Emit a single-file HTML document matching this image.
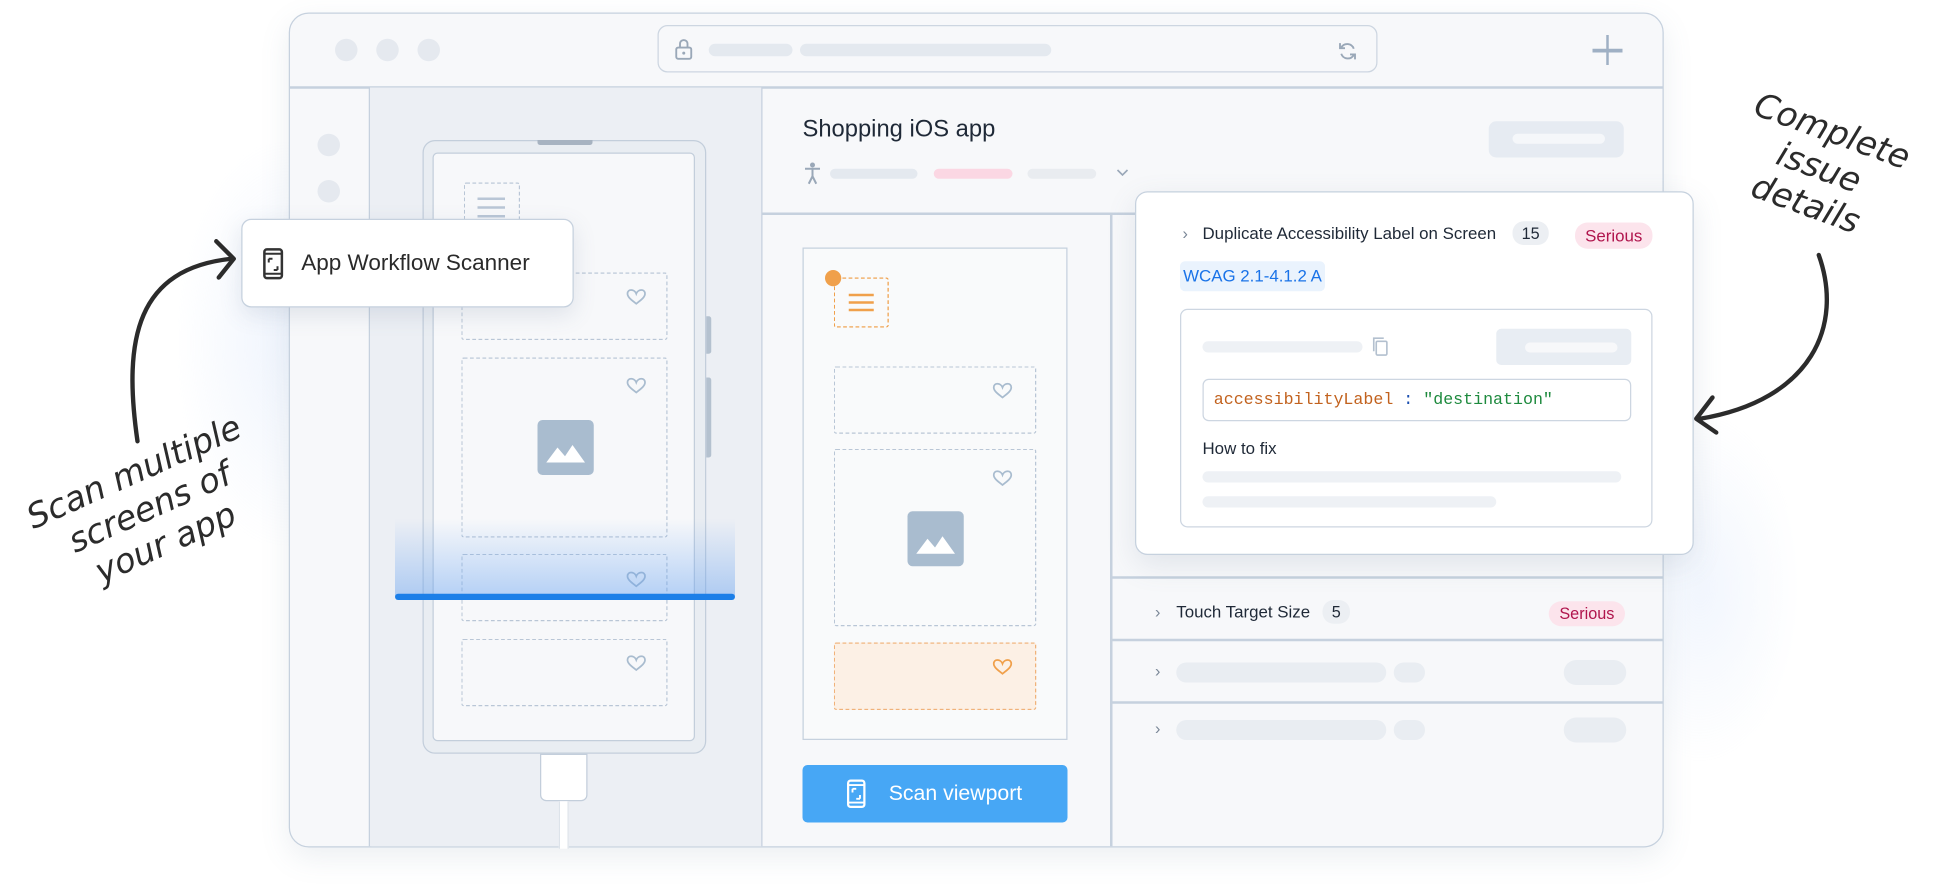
<!DOCTYPE html>
<html><head><meta charset="utf-8"><style>
*{margin:0;padding:0;box-sizing:border-box}
html,body{width:1960px;height:889px;overflow:hidden;background:#fff;font-family:"Liberation Sans",sans-serif}
#w{position:absolute;left:0;top:0;width:1568px;height:712px;transform:scale(1.25);transform-origin:0 0}
.a{position:absolute}
.pill{position:absolute;background:#e9edf2;border-radius:8px}
.dash{position:absolute;border:1.2px dashed #b9c6d6;border-radius:2px}
.hand{position:absolute;font-family:"DejaVu Sans","Liberation Sans",sans-serif;font-style:italic;color:#2b2b2b;font-size:27px;line-height:31px;text-align:center}
</style></head><body><div id="w">
<!-- glow -->
<div class="a" style="left:140px;top:110px;width:180px;height:330px;border-radius:50%;background:radial-gradient(closest-side,rgba(200,218,248,.28),rgba(255,255,255,0));"></div>
<div class="a" style="left:1280px;top:330px;width:160px;height:280px;border-radius:50%;background:radial-gradient(closest-side,rgba(200,218,248,.25),rgba(255,255,255,0));"></div>
<!-- window -->
<div class="a" style="left:231px;top:10px;width:1100px;height:668px;border:1.5px solid #c6d1de;border-radius:16px;background:#f7f8fa;overflow:hidden;box-shadow:0 8px 24px rgba(100,120,150,.12)">
  <div class="a" style="left:0;top:58px;width:1100px;height:1.5px;background:#c6d1de"></div>
  <div class="a" style="left:36px;top:20px;width:18px;height:18px;border-radius:50%;background:#e5e9ef"></div>
  <div class="a" style="left:69px;top:20px;width:18px;height:18px;border-radius:50%;background:#e5e9ef"></div>
  <div class="a" style="left:102px;top:20px;width:18px;height:18px;border-radius:50%;background:#e5e9ef"></div>
  <div class="a" style="left:294px;top:9px;width:576px;height:38px;border:1.3px solid #cdd6e1;border-radius:8px;background:#f7f8fa"></div>
  <svg class="a" style="left:307px;top:19px" width="16" height="18" viewBox="0 0 16 18"><rect x="2" y="8" width="12" height="9" rx="1.5" fill="none" stroke="#9aa8b8" stroke-width="1.5"/><path d="M5 8V5a3 3 0 016 0v3" fill="none" stroke="#9aa8b8" stroke-width="1.5"/><circle cx="8" cy="12.5" r="1.2" fill="#9aa8b8"/></svg>
  <div class="pill" style="left:335px;top:24px;width:67px;height:10px;background:#e4e9ef"></div>
  <div class="pill" style="left:408px;top:24px;width:201px;height:10px;background:#e4e9ef"></div>
  <svg class="a" style="left:837px;top:21px" width="18" height="18" viewBox="0 0 18 18"><path d="M14 7a5.5 5.5 0 00-10-1M4 11a5.5 5.5 0 0010 1" fill="none" stroke="#9aa8b8" stroke-width="1.5"/><path d="M3 2.5v4h4M15 15.5v-4h-4" fill="none" stroke="#9aa8b8" stroke-width="1.5"/></svg>
  <div class="a" style="left:1042px;top:28px;width:24px;height:2.5px;background:#9fb0c4"></div>
  <div class="a" style="left:1052.8px;top:17px;width:2.5px;height:24px;background:#9fb0c4"></div>
  <div class="a" style="left:63px;top:59px;width:1.5px;height:620px;background:#c6d1de"></div>
  <div class="a" style="left:22px;top:96px;width:18px;height:18px;border-radius:50%;background:#e5e9ef"></div>
  <div class="a" style="left:22px;top:133px;width:18px;height:18px;border-radius:50%;background:#e5e9ef"></div>
  <div class="a" style="left:64px;top:59px;width:314px;height:620px;background:#eceff4;border-right:1.5px solid #c6d1de"></div>
  <div class="a" style="left:410px;top:82px;font-size:19px;color:#1f2937">Shopping iOS app</div>
  <svg class="a" style="left:410px;top:118px" width="16" height="20" viewBox="0 0 16 20"><circle cx="8" cy="3" r="2" fill="#9aa8b8"/><path d="M2 6h12M8 6v6M5 18l3-6 3 6" stroke="#9aa8b8" stroke-width="1.6" fill="none"/></svg>
  <div class="pill" style="left:432px;top:124px;width:70px;height:8px;background:#e4e9ef"></div>
  <div class="pill" style="left:515px;top:124px;width:63px;height:8px;background:#fbd7e3"></div>
  <div class="pill" style="left:590px;top:124px;width:55px;height:8px;background:#e9ecf0"></div>
  <svg class="a" style="left:661px;top:123px" width="10" height="8" viewBox="0 0 10 8"><path d="M1 2l4 4 4-4" fill="none" stroke="#9aa8b8" stroke-width="1.3"/></svg>
  <div class="a" style="left:959px;top:86px;width:108px;height:29px;background:#e6ebf2;border-radius:6px"></div>
  <div class="a" style="left:978px;top:96px;width:74px;height:8px;background:#f5f7fa;border-radius:4px"></div>
  <div class="a" style="left:378px;top:159px;width:722px;height:1.5px;background:#c6d1de"></div>
  <div class="a" style="left:656px;top:160px;width:1.5px;height:520px;background:#c6d1de"></div>
  <div class="a" style="left:657px;top:450px;width:445px;height:1.5px;background:#c6d1de"></div>
  <div class="a" style="left:657px;top:500px;width:445px;height:1.5px;background:#c6d1de"></div>
  <div class="a" style="left:657px;top:550px;width:445px;height:1.5px;background:#c6d1de"></div>
  <div class="a" style="left:692px;top:471px;font-size:13px;color:#7a8797">›</div>
  <div class="a" style="left:709px;top:471px;font-size:13.5px;color:#1f2937">Touch Target Size</div>
  <div class="a" style="left:826px;top:469px;width:22px;height:19px;border-radius:9px;background:#eceff3;font-size:13px;color:#1f2937;text-align:center;line-height:19px">5</div>
  <div class="a" style="left:1007px;top:470px;width:61px;height:20px;border-radius:10px;background:#fce4ec;font-size:13px;color:#b0154d;text-align:center;line-height:20px">Serious</div>
  <div class="a" style="left:692px;top:518px;font-size:13px;color:#7a8797">›</div>
  <div class="pill" style="left:709px;top:519px;width:168px;height:16px"></div>
  <div class="pill" style="left:883px;top:519px;width:25px;height:16px"></div>
  <div class="pill" style="left:1019px;top:517px;width:50px;height:20px;border-radius:10px"></div>
  <div class="a" style="left:692px;top:564px;font-size:13px;color:#7a8797">›</div>
  <div class="pill" style="left:709px;top:565px;width:168px;height:16px"></div>
  <div class="pill" style="left:883px;top:565px;width:25px;height:16px"></div>
  <div class="pill" style="left:1019px;top:563px;width:50px;height:20px;border-radius:10px"></div>
  <div class="a" style="left:410px;top:187px;width:212px;height:394px;border:1.5px solid #c6d1de;background:#f9fafb"></div>
  <div class="dash" style="left:435px;top:211px;width:44px;height:40px;border-color:#f0a04b;border-width:1.6px"></div>
  <div class="a" style="left:428px;top:205px;width:13px;height:13px;border-radius:50%;background:#f0a04b"></div>
  <div class="a" style="left:447px;top:224px;width:20px;height:2px;background:#f0a04b;box-shadow:0 6px 0 #f0a04b,0 12px 0 #f0a04b"></div>
  <div class="dash" style="left:435px;top:282px;width:162px;height:54px"></div>
  <div class="dash" style="left:435px;top:348px;width:162px;height:142px"></div>
  <div class="dash" style="left:435px;top:503px;width:162px;height:54px;background:#fcf0e5;border-color:#f0b27a"></div>
  <div class="a" style="left:494px;top:398px;width:45px;height:44px;border-radius:4px;background:#a9bccf"></div>
  <svg class="a" style="left:494px;top:398px" width="45" height="44"><path d="M7 34l9-12 6 7 6-9 10 14z" fill="#fff"/></svg>
  <div class="a" style="left:410px;top:601px;width:212px;height:46px;border-radius:4px;background:#47a7f5"></div>
  <svg class="a" style="left:445px;top:612px" width="16" height="24" viewBox="0 0 16 24"><rect x="1.5" y="1.5" width="13" height="21" rx="2" fill="none" stroke="#fff" stroke-width="1.8"/><path d="M1.5 5h13M1.5 19h13M5 8v3M5 8h3M11 16v-3M11 16h-3" stroke="#fff" stroke-width="1.5" fill="none"/></svg>
  <div class="a" style="left:479px;top:614px;font-size:17px;color:#fff">Scan viewport</div>
</div>
<svg class="a" style="left:0;top:0" width="1568" height="712">
<defs><path id="h" d="M0 3c-1.5-4-7-4-7 0 0 3 4 5.5 7 8 3-2.5 7-5 7-8 0-4-5.5-4-7 0z" fill="none" stroke="#a9bccf" stroke-width="1.4"/></defs>
<use href="#h" x="802" y="307"/><use href="#h" x="802" y="377"/>
<path d="M0 3c-1.5-4-7-4-7 0 0 3 4 5.5 7 8 3-2.5 7-5 7-8 0-4-5.5-4-7 0z" transform="translate(802 528)" fill="none" stroke="#f0a04b" stroke-width="1.4"/>
</svg>
<div class="a" style="left:338px;top:112px;width:227px;height:491px;border:1.5px solid #c3cedb;border-radius:10px;background:#e9edf2"></div>
<div class="a" style="left:430px;top:112px;width:44px;height:4px;background:#a7b3c1;border-radius:0 0 2px 2px"></div>
<div class="a" style="left:565px;top:253px;width:4px;height:30px;background:#b4c1cf;border-radius:0 2px 2px 0"></div>
<div class="a" style="left:565px;top:302px;width:4px;height:64px;background:#b4c1cf;border-radius:0 2px 2px 0"></div>
<div class="a" style="left:346px;top:122px;width:210px;height:471px;border:1.3px solid #c3cedb;border-radius:4px;background:#f7f8fa"></div>
<div class="dash" style="left:371px;top:146px;width:45px;height:44px"></div>
<div class="a" style="left:382px;top:158px;width:22px;height:2px;background:#b9c6d6;box-shadow:0 7px 0 #b9c6d6,0 14px 0 #b9c6d6"></div>
<div class="dash" style="left:369px;top:218px;width:165px;height:54px"></div>
<div class="dash" style="left:369px;top:286px;width:165px;height:144px"></div>
<div class="dash" style="left:369px;top:443px;width:165px;height:54px"></div>
<div class="dash" style="left:369px;top:511px;width:165px;height:54px"></div>
<div class="a" style="left:430px;top:336px;width:45px;height:44px;border-radius:4px;background:#a9bccf"></div>
<svg class="a" style="left:430px;top:336px" width="45" height="44"><path d="M7 34l9-12 6 7 6-9 10 14z" fill="#fff"/></svg>
<svg class="a" style="left:0;top:0" width="1568" height="712"><use href="#h" x="509" y="232"/><use href="#h" x="509" y="303"/><use href="#h" x="509" y="458"/><use href="#h" x="509" y="525"/></svg>
<div class="a" style="left:316px;top:415px;width:272px;height:62px;background:linear-gradient(rgba(120,170,240,0),rgba(100,160,240,.45))"></div>
<div class="a" style="left:316px;top:475px;width:272px;height:5px;border-radius:3px;background:#1c7fe8"></div>
<div class="a" style="left:432px;top:603px;width:38px;height:38px;background:#fff;border:1.3px solid #c3cedb;border-radius:0 0 5px 5px"></div>
<div class="a" style="left:447px;top:641px;width:8px;height:38px;background:#fff;border-left:1px solid #dde3ea;border-right:1px solid #dde3ea"></div>
<div class="a" style="left:193px;top:175px;width:266px;height:71px;background:#fff;border:1.3px solid #c6d1de;border-radius:8px;box-shadow:0 6px 18px rgba(90,110,140,.15)"></div>
<svg class="a" style="left:210px;top:198px" width="18" height="26" viewBox="0 0 18 26"><rect x="1.5" y="1.5" width="14" height="23" rx="2" fill="none" stroke="#333" stroke-width="2"/><path d="M1.5 5h14M1.5 21h14M5 9v3M5 9h3M12 18v-3M12 18h-3" stroke="#333" stroke-width="1.6" fill="none"/></svg>
<div class="a" style="left:241px;top:200px;font-size:18px;color:#2a2a2a">App Workflow Scanner</div>
<div class="a" style="left:908px;top:153px;width:447px;height:291px;background:#fff;border:1.3px solid #c6d1de;border-radius:10px;box-shadow:0 8px 24px rgba(90,110,140,.14)">
  <div class="a" style="left:37px;top:25px;font-size:13px;color:#7a8797">›</div>
  <div class="a" style="left:53px;top:25px;font-size:13.5px;color:#1f2937">Duplicate Accessibility Label on Screen</div>
  <div class="a" style="left:301px;top:23px;width:29px;height:19px;border-radius:9px;background:#eceff3;font-size:13px;color:#1f2937;text-align:center;line-height:19px">15</div>
  <div class="a" style="left:351px;top:24px;width:62px;height:21px;border-radius:10px;background:#fce4ec;font-size:13.5px;color:#b0154d;text-align:center;line-height:21px">Serious</div>
  <div class="a" style="left:35px;top:55px;width:116px;height:24px;border-radius:4px;background:#eaf3fd;font-size:13.5px;color:#1a73e8;text-align:center;line-height:24px">WCAG 2.1-4.1.2 A</div>
  <div class="a" style="left:35px;top:93px;width:378px;height:175px;border:1.3px solid #cdd6e1;border-radius:6px">
    <div class="pill" style="left:17px;top:25px;width:128px;height:9px;background:#eef1f5"></div>
    <svg class="a" style="left:152px;top:21px" width="14" height="16" viewBox="0 0 14 16"><rect x="4" y="4" width="8.5" height="11" rx="1" fill="none" stroke="#b3c0cf" stroke-width="1.3"/><path d="M2 12V1.5h8" fill="none" stroke="#b3c0cf" stroke-width="1.3"/></svg>
    <div class="a" style="left:252px;top:15px;width:108px;height:29px;border-radius:4px;background:#e8edf3"></div>
    <div class="a" style="left:275px;top:26px;width:74px;height:8px;border-radius:4px;background:#f7f8fa"></div>
    <div class="a" style="left:17px;top:55px;width:343px;height:34px;border:1.3px solid #cdd6e1;border-radius:5px;font-family:'Liberation Mono',monospace;font-size:13.3px;line-height:32px;padding-left:8px;white-space:pre"><span style="color:#c2621e">accessibilityLabel</span> <span style="color:#1a4fb0">:</span> <span style="color:#1e8a3e">"destination"</span></div>
    <div class="a" style="left:17px;top:103px;font-size:13.5px;color:#1f2937">How to fix</div>
    <div class="pill" style="left:17px;top:129px;width:335px;height:9px;background:#eef1f5"></div>
    <div class="pill" style="left:17px;top:149px;width:235px;height:9px;background:#eef1f5"></div>
  </div>
</div>
<svg class="a" style="left:0;top:0" width="1568" height="712" fill="none" stroke="#2b2b2b" stroke-width="3.5" stroke-linecap="round" stroke-linejoin="round">
<path d="M110 353C98 270 110 215 185 207"/><path d="M173 193l14 14-12 15"/>
<path d="M1455 204C1475 260 1450 320 1360 335"/><path d="M1370 318l-13 17 16 11"/>
</svg>
<div class="hand" style="left:10px;top:360px;width:220px;transform:rotate(-24deg)">Scan multiple<br>screens of<br>your app</div>
<div class="hand" style="left:1370px;top:88px;width:170px;transform:rotate(20deg)">Complete<br>issue<br>details</div>
</div></body></html>
